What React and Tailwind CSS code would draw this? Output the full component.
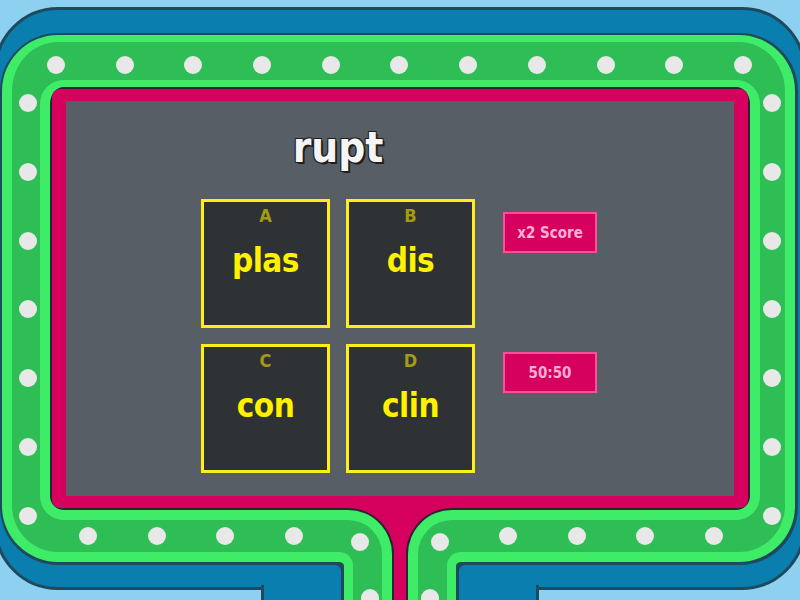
import React from 'react';

const Dot = () => <div className="w-[18px] h-[18px] rounded-full bg-[#e8e8e8]" />;

const dots = (n) => Array.from({ length: n }, (_, i) => <Dot key={i} />);

const Card = ({ letter, word }) => (
  <div className="h-[129px] border-[3px] border-[#ffee1a] bg-[#2e3235] flex flex-col items-center pt-[4px]">
    <div className="text-[18px] leading-[20px] text-[#a59b12]">{letter}</div>
    <div className="mt-[15px] text-[33px] leading-[40px] tracking-[-0.5px] text-[#fff100]">{word}</div>
  </div>
);

const PowerButton = ({ label, className = '' }) => (
  <div
    className={`w-[94px] h-[41px] border-2 border-[#ff4d97] bg-[#d6005e] flex items-center justify-center pt-[2px] text-[15px] text-[#ffb0d5] ${className}`}
  >
    {label}
  </div>
);

export default function App() {
  return (
    <div className="relative w-[800px] h-[600px] overflow-hidden bg-[#8dd0ef] pt-[7px] font-['DejaVu_Sans_Condensed','DejaVu_Sans',sans-serif] font-bold">
      {/* outer blue frame */}
      <div className="-ml-[6px] w-[812px] h-[583px] rounded-[64px] border-[3px] border-[#1f4a5e] bg-[#0a7eaf] pt-[23px] pl-[3px]">
        <div className="w-[798px] h-[532px] rounded-[58px] bg-[#1f4a5e] pt-[2px] pl-[2px] pr-[3px] pb-[3px]">
          {/* green light band */}
          <div className="h-full rounded-[56px] border-[#3eec68] border-t-[7px] border-x-[10px] border-b-[10px] bg-[#2fbd55] grid grid-cols-[28px_1fr_25px] grid-rows-[38px_440px_32px]">
            <div className="col-span-3 flex justify-between pl-[35px] pr-[33px] pt-[14px]">{dots(11)}</div>

            <div className="h-[445px] pt-[14px] pl-[7px] flex flex-col justify-between">{dots(7)}</div>

            <div className="rounded-[24px] border-[#3eec68] border-t-[7px] border-x-[10px] border-b-[10px] bg-[#2a2330] p-[2px]">
              <div className="h-full rounded-[8px] bg-[#d6005e] pt-[12px] px-[14px] pb-[12px]">
                {/* game panel */}
                <div className="h-full bg-[#585e65] pl-[135px] pt-[23px]">
                  <div className="w-[274px] text-center text-[42px] leading-[48px] text-[#f5f5f5] [text-shadow:2px_2px_0_#1e1e1e,-1px_-1px_0_#1e1e1e,1px_-1px_0_#1e1e1e,-1px_1px_0_#1e1e1e]">
                    rupt
                  </div>
                  <div className="mt-[27px] flex">
                    <div className="grid grid-cols-2 gap-[16px] w-[274px]">
                      <Card letter="A" word="plas" />
                      <Card letter="B" word="dis" />
                      <Card letter="C" word="con" />
                      <Card letter="D" word="clin" />
                    </div>
                    <div className="ml-[28px] pt-[13px] flex flex-col">
                      <PowerButton label="x2 Score" />
                      <PowerButton label="50:50" className="mt-[99px]" />
                    </div>
                  </div>
                </div>
              </div>
            </div>

            <div className="h-[445px] pt-[14px] pl-[3px] flex flex-col justify-between">{dots(7)}</div>

            <div className="col-span-3 relative z-10 flex pt-[7px]">
              <div className="ml-[67px] w-[224px] flex justify-between">{dots(4)}</div>
              <div className="ml-auto mr-[62px] w-[224px] flex justify-between">{dots(4)}</div>
            </div>
          </div>
        </div>
      </div>

      {/* lower podium: pink stem splitting the frame into two legs */}
      <div className="absolute left-[261px] top-[585px] w-[278px] h-[20px] bg-[#0a7eaf] border-x-[3px] border-[#1f4a5e]" />
      <div className="absolute left-[340px] top-[496px] w-[120px] h-[110px] bg-[#d6005e]" />

      <div className="absolute left-[264px] top-[508px] w-[130px] h-[100px] rounded-tr-[46px] bg-[#2a2330] pt-[2px] pr-[2px]">
        <div className="h-full rounded-tr-[44px] border-t-[10px] border-r-[10px] border-[#3eec68] bg-[#2fbd55] pt-[32px] pr-[29px]">
          <div className="h-full rounded-tr-[14px] border-t-[10px] border-r-[9px] border-[#3eec68] bg-[#1f4a5e] pt-[3px] pr-[3px]">
            <div className="h-full rounded-tr-[6px] bg-[#0a7eaf]" />
          </div>
        </div>
      </div>
      <div className="absolute left-[406px] top-[508px] w-[130px] h-[100px] rounded-tl-[46px] bg-[#2a2330] pt-[2px] pl-[2px]">
        <div className="h-full rounded-tl-[44px] border-t-[10px] border-l-[10px] border-[#3eec68] bg-[#2fbd55] pt-[32px] pl-[29px]">
          <div className="h-full rounded-tl-[14px] border-t-[10px] border-l-[9px] border-[#3eec68] bg-[#1f4a5e] pt-[3px] pl-[3px]">
            <div className="h-full rounded-tl-[6px] bg-[#0a7eaf]" />
          </div>
        </div>
      </div>

      {/* lights on the legs */}
      <div className="absolute left-[351px] top-[533px]"><Dot /></div>
      <div className="absolute left-[431px] top-[533px]"><Dot /></div>
      <div className="absolute left-[361px] top-[589px]"><Dot /></div>
      <div className="absolute left-[421px] top-[589px]"><Dot /></div>
    </div>
  );
}
